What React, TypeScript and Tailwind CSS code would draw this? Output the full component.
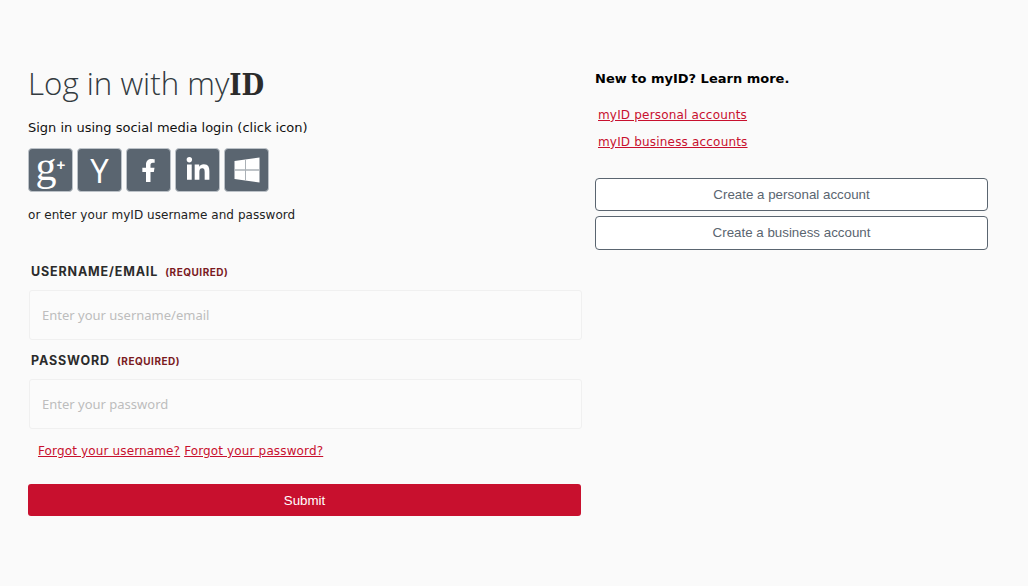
import React from "react";
import { FaFacebookF, FaLinkedinIn } from "react-icons/fa";

const verdana = "font-['DejaVu_Sans',sans-serif]";
const label = "font-['Inter',sans-serif] font-bold text-[12.5px] tracking-[0.85px] text-[#2b2b2b] uppercase";
const req = "font-['Inter',sans-serif] font-bold text-[10px] tracking-[0.5px] text-[#7a1a1f] uppercase ml-[7px]";
const input = "block h-[50px] w-[553px] ml-px rounded-[3px] border border-[#f0f0f0] bg-[#fbfbfb] px-3 font-['Noto_Sans',sans-serif] text-[13px] placeholder:text-[#bdbdbd] outline-none";
const link = "text-[#c8102e] underline";

function Tile({ children }: { children: React.ReactNode }) {
  return (
    <div className="flex h-[44px] w-[45px] items-center justify-center rounded-[4px] border border-[#bcc2c8] bg-[#5a6570] text-white">
      {children}
    </div>
  );
}

function WindowsLogo() {
  return (
    <svg width="26" height="26" viewBox="0 0 26 26" aria-hidden="true">
      <polygon points="0.5,4 25.5,0.5 25.5,25.5 0.5,22" fill="#ffffff" />
      <line x1="11.5" y1="2.4" x2="11.5" y2="23.6" stroke="#aab0b6" strokeWidth="1" />
      <line x1="0.5" y1="13" x2="25.5" y2="13" stroke="#aab0b6" strokeWidth="1.5" />
    </svg>
  );
}

export default function App() {
  return (
    <div className={`min-h-[586px] bg-[#fafafa] ${verdana}`}>
      <div className="flex pl-[28px] pt-[61px]">
        <div className="w-[567px]">
          <h1 className="flex h-[44px] items-baseline font-['Open_Sans',sans-serif] text-[31.3px] font-light leading-[44px] text-[#333a40]">
            <span>Log in with my</span>
            <span className="font-['DejaVu_Serif',serif] text-[29px] font-bold text-[#2b2b2b] [font-stretch:condensed]">ID</span>
          </h1>
          <p className="mt-[15px] text-[13px] leading-[16px] text-[#111]">Sign in using social media login (click icon)</p>
          <div className="mt-[12px] flex gap-[4px]">
            <Tile>
              <span className="flex items-baseline leading-none -mt-[8px]">
                <span className="font-['Liberation_Serif',serif] text-[42px] font-medium leading-none">g</span>
                <span className="font-['Liberation_Sans',sans-serif] text-[15px] font-bold leading-none relative -top-[10px]">+</span>
              </span>
            </Tile>
            <Tile><span className="font-['Open_Sans',sans-serif] text-[33px] font-normal leading-none">Y</span></Tile>
            <Tile><FaFacebookF size={23} /></Tile>
            <Tile><FaLinkedinIn size={26} /></Tile>
            <Tile><WindowsLogo /></Tile>
          </div>
          <p className="mt-[15px] text-[12px] tracking-[0.05px] leading-[16px] text-[#222]">or enter your myID username and password</p>

          <div className="mt-[41px] ml-[3px] flex h-[16px] items-center">
            <span className={label}>Username/Email</span>
            <span className={req}>(Required)</span>
          </div>
          <input className={`${input} mt-[10px]`} placeholder="Enter your username/email" />
          <div className="mt-[13px] ml-[3px] flex h-[16px] items-center">
            <span className={label}>Password</span>
            <span className={req}>(Required)</span>
          </div>
          <input className={`${input} mt-[10px]`} placeholder="Enter your password" />
          <div className="ml-[10px] mt-[14px] flex gap-[4px] text-[12px] tracking-[0.14px] leading-[16px]">
            <a className={link}>Forgot your username?</a>
            <a className={link}>Forgot your password?</a>
          </div>
          <button className="mt-[25px] block h-[32px] w-[553px] rounded-[3px] bg-[#c8102e] pt-[1px] font-['Liberation_Sans',sans-serif] text-[13.33px] text-white">
            Submit
          </button>
        </div>

        <div className="ml-0 w-[393px] pt-[10px]">
          <h2 className="text-[13px] font-bold leading-[16px] text-black">New to myID? Learn more.</h2>
          <div className="ml-[3px] mt-[20px] flex flex-col gap-[11px] text-[12px] tracking-[0.18px] leading-[16px]">
            <a className={link}>myID personal accounts</a>
            <a className={link}>myID business accounts</a>
          </div>
          <div className="mt-[28px] flex flex-col gap-[5px] font-['Liberation_Sans',sans-serif] text-[13.33px] text-[#5a6570]">
            <button className="h-[33px] rounded-[4px] border border-[#5a6570] bg-white">Create a personal account</button>
            <button className="h-[34px] rounded-[4px] border border-[#5a6570] bg-white">Create a business account</button>
          </div>
        </div>
      </div>
    </div>
  );
}
